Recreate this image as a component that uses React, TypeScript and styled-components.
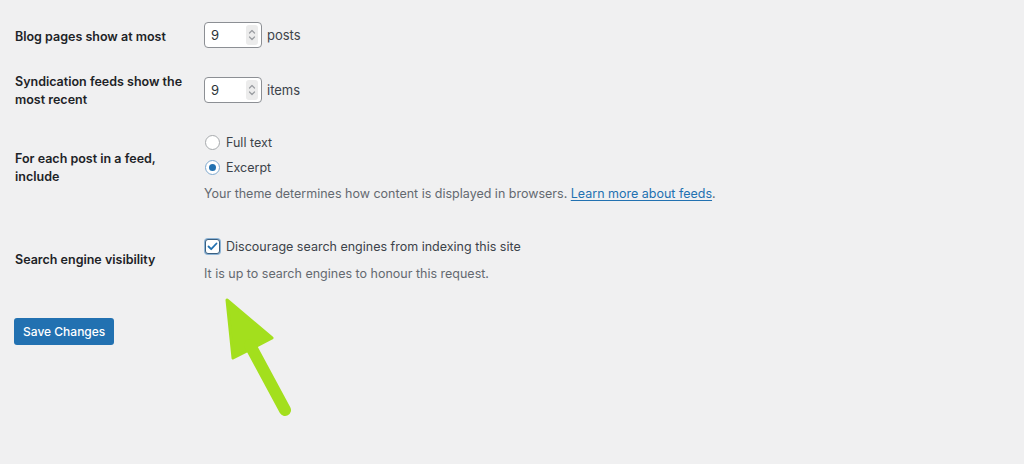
import React from "react";
import styled, { createGlobalStyle } from "styled-components";

const Global = createGlobalStyle`
  html, body { margin: 0; padding: 0; background: #f0f0f1; }
  body { font-family: "Inter", "Noto Sans", sans-serif; font-size: 12.5px; color: #3c434a; }
  #root { min-height: 464px; }
`;

const Page = styled.div`
  position: relative;
  width: 1024px;
  height: 464px;
  box-sizing: border-box;
  padding: 22px 0 0 15px;
  display: flex;
  flex-direction: column;
`;

const Row = styled.div<{ $top: number }>`
  display: grid;
  grid-template-columns: 189px 1fr;
  align-items: center;
  margin-top: ${(p) => p.$top}px;
`;

const Label = styled.div<{ $shift?: number }>`
  font-weight: 600;
  color: #1d2327;
  line-height: 18px;
  width: 178px;
  position: relative;
  top: ${(p) => p.$shift ?? 0}px;
`;

const Field = styled.div`
  display: flex;
  flex-direction: column;
`;

const InlineField = styled.div`
  display: flex;
  align-items: center;
  gap: 5px;
`;

const NumberBox = styled.div`
  box-sizing: border-box;
  width: 58px;
  height: 26px;
  border: 1px solid #8c8f94;
  border-radius: 4px;
  background: #fff;
  display: flex;
  align-items: center;
  justify-content: space-between;
  padding: 0 3px 0 6px;
  color: #2c3338;
  font-size: 13px;
`;

const Spinner = styled.span`
  width: 12px;
  height: 20px;
  background: #ececec;
  border-radius: 3px;
  display: flex;
  align-items: center;
  justify-content: center;
`;

const Unit = styled.span`
  color: #3c434a;
  font-size: 13px;
`;

const Choice = styled.label<{ $top?: number }>`
  display: flex;
  align-items: center;
  gap: 6px;
  height: 20px;
  margin-top: ${(p) => p.$top ?? 0}px;
  color: #3c434a;
`;

const Radio = styled.span<{ $checked?: boolean }>`
  box-sizing: border-box;
  width: 15px;
  height: 15px;
  border-radius: 50%;
  background: #fff;
  border: 1px solid ${(p) => (p.$checked ? "#7fa9cf" : "#a7aaad")};
  display: flex;
  align-items: center;
  justify-content: center;
  margin-left: 1px;
  &::after {
    content: "";
    width: 7px;
    height: 7px;
    border-radius: 50%;
    background: ${(p) => (p.$checked ? "#2271b1" : "transparent")};
  }
`;

const Checkbox = styled.span`
  box-sizing: border-box;
  width: 15px;
  height: 15px;
  border-radius: 3px;
  background: #fff;
  border: 1px solid #3a5f80;
  box-shadow: 0 0 0 1px #8db4d6;
  display: flex;
  align-items: center;
  justify-content: center;
  margin-left: 1px;
`;

const Description = styled.p<{ $top: number }>`
  margin: ${(p) => p.$top}px 0 0;
  color: #646970;
  line-height: 18px;
`;

const Link = styled.a`
  color: #2271b1;
  text-decoration: underline;
  text-underline-offset: 2px;
`;

const Button = styled.button`
  margin: 35px 0 0 -1px;
  align-self: flex-start;
  height: 27px;
  padding: 0 9px;
  border: none;
  border-radius: 3px;
  background: #2271b1;
  color: #fff;
  font-family: inherit;
  font-size: 12px;
  font-weight: 500;
  cursor: pointer;
`;

const ArrowLayer = styled.svg`
  position: absolute;
  left: 0;
  top: 0;
  pointer-events: none;
`;

function Spin() {
  return (
    <Spinner>
      <svg width="8" height="14" viewBox="0 0 8 14" fill="none" stroke="#9a9da1" strokeWidth="1.2" strokeLinecap="round" strokeLinejoin="round">
        <path d="M1.5 5 L4 2.5 L6.5 5" />
        <path d="M1.5 9 L4 11.5 L6.5 9" />
      </svg>
    </Spinner>
  );
}

export default function App() {
  return (
    <>
      <Global />
      <Page>
        <Row $top={0}>
          <Label $shift={2}>Blog pages show at most</Label>
          <InlineField>
            <NumberBox>
              <span>9</span>
              <Spin />
            </NumberBox>
            <Unit>posts</Unit>
          </InlineField>
        </Row>
        <Row $top={24}>
          <Label $shift={1}>Syndication feeds show the most recent</Label>
          <InlineField>
            <NumberBox>
              <span>9</span>
              <Spin />
            </NumberBox>
            <Unit>items</Unit>
          </InlineField>
        </Row>
        <Row $top={24}>
          <Label>For each post in a feed, include</Label>
          <Field>
            <Choice>
              <Radio />
              Full text
            </Choice>
            <Choice $top={5}>
              <Radio $checked />
              Excerpt
            </Choice>
            <Description $top={8}>
              Your theme determines how content is displayed in browsers.{" "}
              <Link href="#">Learn more about feeds</Link>.
            </Description>
          </Field>
        </Row>
        <Row $top={33}>
          <Label>Search engine visibility</Label>
          <Field>
            <Choice>
              <Checkbox>
                <svg width="11" height="9" viewBox="0 0 11 9" fill="none" stroke="#2271b1" strokeWidth="1.8" strokeLinecap="round" strokeLinejoin="round">
                  <path d="M1.5 4.5 L4.2 7.2 L9.5 1.5" />
                </svg>
              </Checkbox>
              Discourage search engines from indexing this site
            </Choice>
            <Description $top={9}>It is up to search engines to honour this request.</Description>
          </Field>
        </Row>
        <Button>Save Changes</Button>
        <ArrowLayer width="1024" height="464" viewBox="0 0 1024 464">
          <g fill="#a3df1d" stroke="#a3df1d" strokeLinejoin="round">
            <polygon points="227,300 272,338 233,358" strokeWidth="3" />
            <line x1="250" y1="345" x2="285" y2="410" strokeWidth="12" strokeLinecap="round" />
          </g>
        </ArrowLayer>
      </Page>
    </>
  );
}
